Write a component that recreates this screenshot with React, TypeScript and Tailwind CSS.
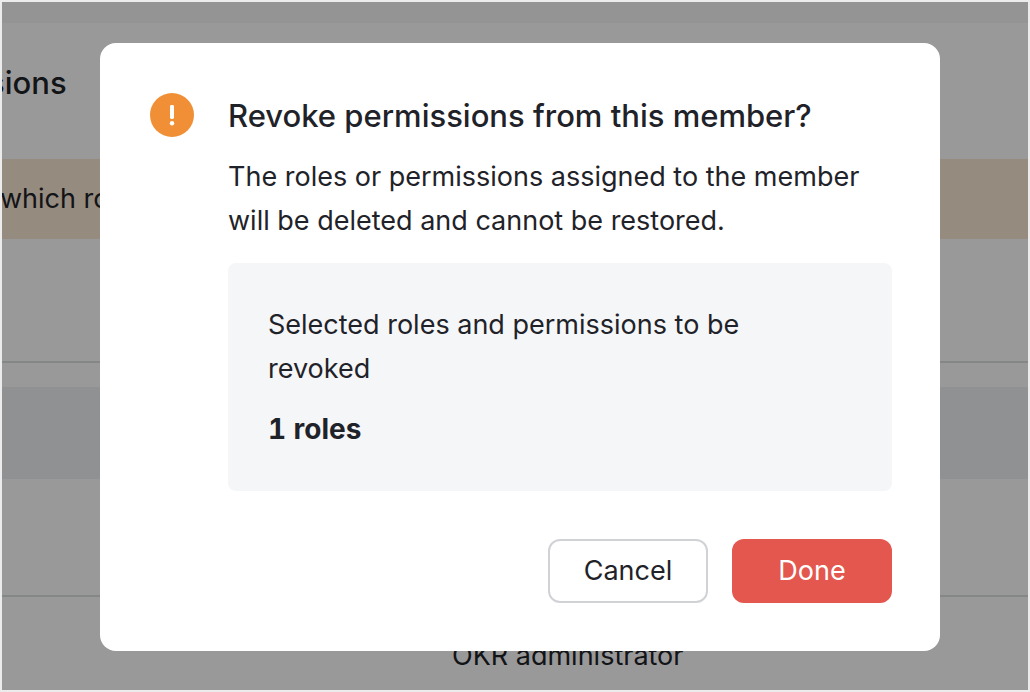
import React from "react";

const WarningIcon = () => (
  <svg viewBox="0 0 24 24" className="size-12 shrink-0" aria-hidden="true">
    <circle cx="12" cy="12" r="11" fill="#f08f36" />
    <rect x="11" y="7" width="2" height="7" rx="0.7" fill="#fff" />
    <circle cx="12" cy="16.1" r="1.1" fill="#fff" />
  </svg>
);

const PermissionsPage = () => (
  <div className="flex h-full flex-col bg-white" aria-hidden="true">
    <div className="h-[21px] shrink-0 bg-[#f7f7f7]" />
    <div className="flex h-[136px] shrink-0 items-center pb-4">
      <h1 className="-ml-3.5 text-[31px] leading-10 font-medium">sions</h1>
    </div>
    <div className="flex h-20 shrink-0 items-center bg-[#fae8d4]">
      <p className="-ml-0.5 whitespace-nowrap">which roles</p>
    </div>
    <div className="h-[124px] shrink-0 border-b-2 border-[#dedfe0]" />
    <div className="h-[116px] shrink-0 pt-6">
      <div className="h-full bg-[#f0f2f5]" />
    </div>
    <div className="h-[118px] shrink-0 border-b-2 border-[#dedfe0]" />
    <div className="grid flex-1 grid-cols-[450px_1fr] pt-9">
      <p className="col-start-2 leading-[46px]">OKR administrator</p>
    </div>
  </div>
);

const RevokeDialog = () => (
  <div
    role="dialog"
    aria-modal="true"
    aria-labelledby="revoke-title"
    className="flex flex-1 flex-col gap-12 rounded-2xl bg-white p-12"
  >
    <div className="flex gap-8">
      <WarningIcon />
      <div className="min-w-0 flex-1">
        <h2 id="revoke-title" className="mb-3.5 text-[31px] leading-[50px] font-medium">
          Revoke permissions from this member?
        </h2>
        <p className="mb-5 leading-[44px]">
          The roles or permissions assigned to the member will be deleted and
          cannot be restored.
        </p>
        <div className="rounded-lg bg-[#f5f6f8] p-10 leading-[44px]">
          <p className="mb-4 max-w-[520px]">
            Selected roles and permissions to be revoked
          </p>
          <p className="text-[28px] font-bold tabular-nums">1 roles</p>
        </div>
      </div>
    </div>
    <div className="flex justify-end gap-6">
      <button
        type="button"
        className="h-16 w-40 rounded-xl border-2 border-[#d0d2d6] bg-white"
      >
        Cancel
      </button>
      <button type="button" className="h-16 w-40 rounded-xl bg-[#e3574e] text-white">
        Done
      </button>
    </div>
  </div>
);

export default function App() {
  return (
    <div className="h-screen bg-[#ececec] p-0.5 font-['Inter',sans-serif] text-[27px] text-[#1f2329]">
      <div className="relative h-full overflow-hidden">
        <PermissionsPage />
        <div className="absolute inset-0 flex items-start bg-black/40 pt-[41px] pr-[88px] pl-[98px]">
          <RevokeDialog />
        </div>
      </div>
    </div>
  );
}
